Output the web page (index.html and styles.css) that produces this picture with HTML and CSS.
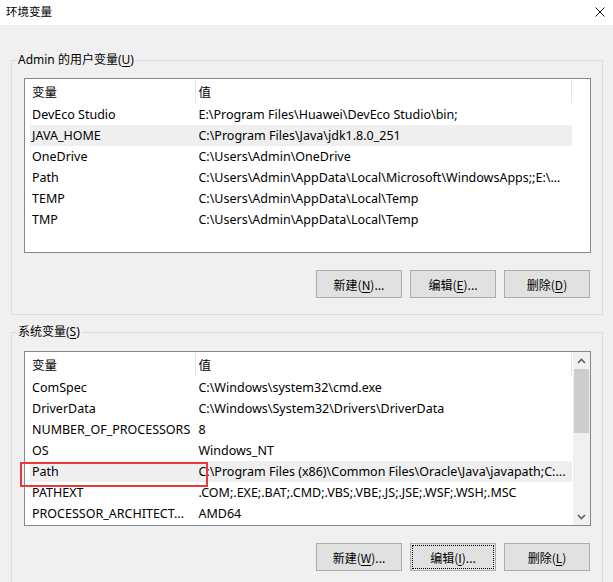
FILE: index.html
```html
<!DOCTYPE html>
<html lang="zh-CN">

<head>
  <meta charset="UTF-8" />
  <title>环境变量</title>
  <link rel="stylesheet" href="styles.css">
</head>

<body>
  <div class="window">
    <div class="titlebar">
      <span class="title">环境变量</span>
      <svg class="close" viewBox="0 0 10 10" width="10" height="10">
        <path d="M0.5 0.5L9.5 9.5M9.5 0.5L0.5 9.5" stroke="#111" stroke-width="1" fill="none" />
      </svg>
    </div>

    <div class="content">
      <fieldset class="group">
        <legend>Admin 的用户变量(<u>U</u>)</legend>
        <div class="list">
          <div class="list-main">
            <div class="list-head">
              <div class="col col-name">变量</div>
              <div class="col col-value">值</div>
            </div>
            <div class="row"><div class="col col-name">DevEco Studio</div><div class="col col-value">E:\Program Files\Huawei\DevEco Studio\bin;</div></div>
            <div class="row selected"><div class="col col-name">JAVA_HOME</div><div class="col col-value">C:\Program Files\Java\jdk1.8.0_251</div></div>
            <div class="row"><div class="col col-name">OneDrive</div><div class="col col-value">C:\Users\Admin\OneDrive</div></div>
            <div class="row"><div class="col col-name">Path</div><div class="col col-value">C:\Users\Admin\AppData\Local\Microsoft\WindowsApps;;E:\...</div></div>
            <div class="row"><div class="col col-name">TEMP</div><div class="col col-value">C:\Users\Admin\AppData\Local\Temp</div></div>
            <div class="row"><div class="col col-name">TMP</div><div class="col col-value">C:\Users\Admin\AppData\Local\Temp</div></div>
          </div>
        </div>
        <div class="actions">
          <button class="btn">新建(<u>N</u>)...</button>
          <button class="btn">编辑(<u>E</u>)...</button>
          <button class="btn">删除(<u>D</u>)</button>
        </div>
      </fieldset>

      <fieldset class="group">
        <legend>系统变量(<u>S</u>)</legend>
        <div class="list">
          <div class="list-main">
            <div class="list-head">
              <div class="col col-name">变量</div>
              <div class="col col-value">值</div>
            </div>
            <div class="row"><div class="col col-name">ComSpec</div><div class="col col-value">C:\Windows\system32\cmd.exe</div></div>
            <div class="row"><div class="col col-name">DriverData</div><div class="col col-value">C:\Windows\System32\Drivers\DriverData</div></div>
            <div class="row"><div class="col col-name">NUMBER_OF_PROCESSORS</div><div class="col col-value">8</div></div>
            <div class="row"><div class="col col-name">OS</div><div class="col col-value">Windows_NT</div></div>
            <div class="row selected marked"><div class="col col-name">Path</div><div class="col col-value">C:\Program Files (x86)\Common Files\Oracle\Java\javapath;C:...</div><span class="mark"></span></div>
            <div class="row"><div class="col col-name">PATHEXT</div><div class="col col-value">.COM;.EXE;.BAT;.CMD;.VBS;.VBE;.JS;.JSE;.WSF;.WSH;.MSC</div></div>
            <div class="row"><div class="col col-name">PROCESSOR_ARCHITECT...</div><div class="col col-value">AMD64</div></div>
          </div>
          <div class="scrollbar">
            <div class="arrow">
              <svg viewBox="0 0 9 6" width="9" height="6"><path d="M1 5L4.5 1.5L8 5" stroke="#606060" stroke-width="1.6" fill="none" /></svg>
            </div>
            <div class="track"><div class="thumb"></div></div>
            <div class="arrow">
              <svg viewBox="0 0 9 6" width="9" height="6"><path d="M1 1L4.5 4.5L8 1" stroke="#606060" stroke-width="1.6" fill="none" /></svg>
            </div>
          </div>
        </div>
        <div class="actions">
          <button class="btn">新建(<u>W</u>)...</button>
          <button class="btn focused">编辑(<u>I</u>)...</button>
          <button class="btn">删除(<u>L</u>)</button>
        </div>
      </fieldset>
    </div>
  </div>
</body>

</html>
```

FILE: styles.css
```css
:root {
  --bg: #f0f0f0;
  --group-border: #dcdcdc;
  --list-border: #828790;
  --row-selected: #efefef;
  --btn-bg: #e1e1e1;
  --btn-border: #adadad;
  --mark: #e83a3a;
}

* {
  box-sizing: border-box;
}

body {
  margin: 0;
  font-family: "Noto Sans", "Noto Sans CJK SC", sans-serif;
  font-size: 12.5px;
  color: #000;
  background: var(--bg);
}

.window {
  width: 613px;
  height: 582px;
  overflow: hidden;
  background: var(--bg);
}

.titlebar {
  height: 25px;
  display: flex;
  align-items: center;
  justify-content: space-between;
  padding: 0 8px 4px 6px;
  background: #fff;
}

.title {
  font-family: "Noto Sans CJK SC", sans-serif;
  font-size: 11.5px;
  line-height: 16px;
}

.close {
  display: block;
  margin-top: 2px;
}

.content {
  padding: 27px 10px 0 11px;
}

.group {
  margin: 0;
  padding: 10px 11px 16px 12px;
  border: 1px solid var(--group-border);
}

.group + .group {
  margin-top: 9px;
  padding-top: 11px;
}

.group legend {
  padding: 0 2px;
  margin-left: -8px;
  line-height: 16px;
  font-size: 12px;
}

u {
  text-decoration-thickness: 1px;
  text-underline-offset: 2px;
}

.list {
  display: flex;
  height: 175px;
  background: #fff;
  border: 1px solid var(--list-border);
}

.list-main {
  flex: 1;
  min-width: 0;
}

.list-head {
  display: flex;
  height: 25px;
  align-items: center;
  padding-left: 5px;
  width: 547px;
}

.list-head .col {
  height: 23px;
  display: flex;
  align-items: center;
  border-right: 1px solid #e5e5e5;
}

.col {
  padding-left: 2px;
  white-space: nowrap;
  overflow: hidden;
}

.col-name {
  width: 168px;
}

.col-value {
  width: 379px;
}

.row {
  position: relative;
  display: flex;
  align-items: center;
  height: 21px;
  margin-left: 5px;
  width: 542px;
}

.row.selected {
  background: var(--row-selected);
}

.mark {
  position: absolute;
  left: -10px;
  top: 1px;
  width: 188px;
  height: 25px;
  border: 2px solid var(--mark);
}

.scrollbar {
  width: 17px;
  display: flex;
  flex-direction: column;
  background: var(--bg);
}

.arrow {
  height: 17px;
  display: flex;
  align-items: center;
  justify-content: center;
}

.track {
  flex: 1;
}

.thumb {
  height: 64px;
  margin: 0 1px;
  background: #cdcdcd;
}

.actions {
  display: flex;
  justify-content: flex-end;
  gap: 8px;
  margin-top: 17px;
  padding-right: 1px;
}

.btn {
  width: 86px;
  height: 28px;
  padding: 0;
  background: var(--btn-bg);
  border: 1px solid var(--btn-border);
  font-family: "Noto Sans CJK SC", sans-serif;
  font-size: 12px;
  color: #000;
}

.btn.focused {
  outline: 1px dotted #000;
  outline-offset: -3px;
}
```
